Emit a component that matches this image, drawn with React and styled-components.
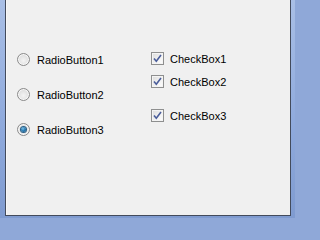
import React from "react";
import styled, { createGlobalStyle } from "styled-components";

const Global = createGlobalStyle`
  html, body { margin: 0; padding: 0; background: #8fa8d8; }
  body { font-family: "Liberation Sans", Arial, sans-serif; }
`;

const Frame = styled.div`
  width: 295px;
  height: 218px;
  box-sizing: border-box;
  background: linear-gradient(180deg, #a9bfe6 0%, #8ea9dc 60%, #7f9bd0 100%);
  padding: 0 4px 2px 5px;
  display: flex;
`;

const Client = styled.div`
  flex: 1;
  box-sizing: border-box;
  border-left: 1px solid #434b5c;
  border-right: 1px solid #434b5c;
  border-bottom: 1px solid #434b5c;
  background: #f0f0f0;
  box-shadow: inset 1px 0 0 #f8f8f8;
  display: grid;
  grid-template-columns: 134px 1fr;
  padding: 53px 0 0 11px;
  align-content: start;
`;

const Column = styled.div`
  display: flex;
  flex-direction: column;
  margin-top: ${(p) => p.$top || 0}px;
`;

const Item = styled.label`
  display: flex;
  align-items: center;
  height: 13px;
  gap: ${(p) => p.$gap}px;
  margin-top: ${(p) => p.$mt || 0}px;
  font-size: 11px;
  color: #000;
  white-space: nowrap;
`;

const RadioMark = styled.span`
  width: 13px;
  height: 13px;
  box-sizing: border-box;
  border-radius: 50%;
  border: 1px solid #8a8a8a;
  background: radial-gradient(circle at 50% 60%, #f4f4f4 0%, #e2e2e2 55%, #d8d8d8 100%);
  box-shadow: inset 0 0 0 1px #f7f7f7;
  display: flex;
  align-items: center;
  justify-content: center;
  flex: none;
`;

const Dot = styled.span`
  width: 5px;
  height: 5px;
  border-radius: 50%;
  background: radial-gradient(circle at 40% 35%, #7fc4ea 0%, #2a7db5 45%, #0e4f7c 100%);
  box-shadow: 0 0 0 1px #2b5f86;
`;

const BoxMark = styled.span`
  width: 13px;
  height: 13px;
  box-sizing: border-box;
  border: 1px solid #8e8f8f;
  background: linear-gradient(135deg, #dcdcdc 0%, #f2f2f2 60%, #ffffff 100%);
  box-shadow: inset 0 0 0 1px #f4f4f4;
  display: flex;
  align-items: center;
  justify-content: center;
  flex: none;
`;

const Radio = ({ label, checked, mt }) => (
  <Item $gap={7} $mt={mt}>
    <RadioMark>{checked && <Dot />}</RadioMark>
    <span>{label}</span>
  </Item>
);

const Check = ({ label, mt }) => (
  <Item $gap={6} $mt={mt}>
    <BoxMark>
      <svg width="9" height="9" viewBox="0 0 9 9">
        <path d="M1 4.5 L3.3 7.2 L8 1" fill="none" stroke="#4a5d9a" strokeWidth="1.6" />
      </svg>
    </BoxMark>
    <span>{label}</span>
  </Item>
);

export default function App() {
  return (
    <>
      <Global />
      <Frame>
        <Client>
          <Column>
            <Radio label="RadioButton1" />
            <Radio label="RadioButton2" mt={22} />
            <Radio label="RadioButton3" checked mt={22} />
          </Column>
          <Column $top={-1}>
            <Check label="CheckBox1" />
            <Check label="CheckBox2" mt={10} />
            <Check label="CheckBox3" mt={21} />
          </Column>
        </Client>
      </Frame>
    </>
  );
}
